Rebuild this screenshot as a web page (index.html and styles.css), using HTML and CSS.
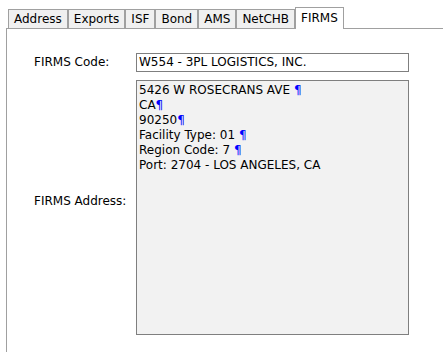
FILE: index.html
```html
<!DOCTYPE html>
<html lang="en">
<head>
    <meta charset="UTF-8">
    <title>FIRMS</title>
    <link rel="stylesheet" href="styles.css">
</head>
<body>

<div class="tabs">
    <span class="tab">Address</span>
    <span class="tab">Exports</span>
    <span class="tab">ISF</span>
    <span class="tab">Bond</span>
    <span class="tab">AMS</span>
    <span class="tab">NetCHB</span>
    <span class="tab tab--active">FIRMS</span>
</div>

<div class="panel">
    <div class="form">
        <label class="form__label">FIRMS Code:</label>
        <div class="form__input">W554 - 3PL LOGISTICS, INC.</div>

        <label class="form__label form__label--mid">FIRMS Address:</label>
        <!-- 只读地址框，段落符号用蓝色显示 -->
        <div class="form__area">
            <div>5426 W ROSECRANS AVE <span class="pil">¶</span></div>
            <div>CA<span class="pil">¶</span></div>
            <div>90250<span class="pil">¶</span></div>
            <div>Facility Type: 01 <span class="pil">¶</span></div>
            <div>Region Code: 7 <span class="pil">¶</span></div>
            <div>Port: 2704 - LOS ANGELES, CA</div>
        </div>
    </div>
</div>

</body>
</html>
```

FILE: styles.css
```css
* {
    box-sizing: border-box;
    margin: 0;
    padding: 0;
}

:root {
    --line: #a0a0a0;
    --field: #7f7f7f;
}

body {
    background: #fff;
    color: #000;
    font: 12px/15px "DejaVu Sans", Verdana, sans-serif;
    height: 100vh;
    overflow: hidden;
}

.tabs {
    display: flex;
    align-items: flex-end;
    height: 28px;
    padding-left: 8px;
}

.tab {
    background-color: #f0f0f0;
    border: 1px solid var(--line);
    border-bottom: 0;
    height: 19px;
    line-height: 18px;
    padding: 0 5px;
}

.tab--active {
    background-color: #fff;
    height: 22px;
    line-height: 20px;
    margin-bottom: -1px;
    padding: 0 5px;
    position: relative;
    z-index: 1;
}

.panel {
    border-left: 1px solid var(--line);
    border-top: 1px solid var(--line);
    height: calc(100vh - 28px);
    margin-left: 6px;
    padding: 24px 0 0 27px;
}

.form {
    display: grid;
    grid-template-columns: 102px 273px;
    row-gap: 8px;
}

.form__label {
    align-self: center;
}

.form__label--mid {
    margin-bottom: 12px;
}

.form__input {
    border: 1px solid var(--field);
    height: 19px;
    line-height: 17px;
    padding: 0 2px;
}

.form__area {
    background-color: #f2f2f2;
    border: 1px solid var(--field);
    height: 255px;
    padding: 2px 2px 0;
}

.pil {
    color: #0000ff;
}
```
